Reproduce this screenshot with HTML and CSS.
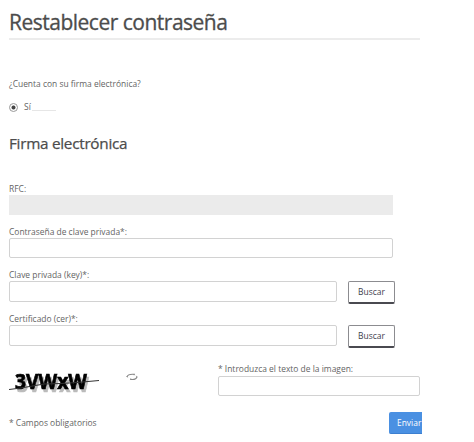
FILE: index.html
```html
<!DOCTYPE html>
<html lang="es">
<head>
    <meta charset="UTF-8">
    <meta name="viewport" content="width=device-width, initial-scale=1.0">
    <title>Restablecer contraseña</title>
    <link rel="stylesheet" href="styles.css">
</head>
<body>
    <form class="page">
        <h1 class="title">Restablecer contraseña</h1>

        <p class="question">¿Cuenta con su firma electrónica?</p>
        <label class="option">
            <input type="radio" class="radio" name="firma" checked>
            <span>Sí</span>
            <span class="option-line"></span>
        </label>

        <h2 class="subtitle">Firma electrónica</h2>

        <div class="group">
            <label for="rfc">RFC:</label>
            <input type="text" class="field disabled" id="rfc" disabled>
        </div>
        <div class="group">
            <label for="clave">Contraseña de clave privada*:</label>
            <input type="password" class="field" id="clave">
        </div>
        <div class="group file-group">
            <label for="key">Clave privada (key)*:</label>
            <div class="file-row">
                <input type="text" class="field" id="key">
                <button type="button" class="browse">Buscar</button>
            </div>
        </div>
        <div class="group file-group">
            <label for="cer">Certificado (cer)*:</label>
            <div class="file-row">
                <input type="text" class="field" id="cer">
                <button type="button" class="browse">Buscar</button>
            </div>
        </div>

        <div class="captcha-row">
            <svg class="captcha" width="92" height="32" viewBox="0 0 92 32">
                <text class="captcha-text" x="6" y="22" textLength="72" lengthAdjust="spacingAndGlyphs">3VWxW</text>
                <path d="M0 22.5 L12 21 L35 17 L52 16.5 L68 15.5 L90 13.5" fill="none" stroke="#333" stroke-width="1"/>
            </svg>
            <svg class="refresh" width="12" height="8" viewBox="0 0 12 8" fill="none" stroke="#888" stroke-width="1.1">
                <path d="M1 4 C1.6 1.8 4.6 1 8.6 1.4"/>
                <path d="M11 3.6 C10.6 6 8 6.8 4.4 6.4"/>
                <path d="M8.4 .9 L8.2 2.3 M4.5 7 L4.7 5.4 M.6 3 L1.6 4.4 M10.2 2.8 L11.2 4.2" stroke-width=".8"/>
            </svg>
            <div class="captcha-group">
                <label for="texto">* Introduzca el texto de la imagen:</label>
                <input type="text" class="field" id="texto">
            </div>
        </div>

        <div class="footer">
            <span class="required">* Campos obligatorios</span>
            <button type="button" class="send">Enviar</button>
        </div>
    </form>
</body>
</html>
```
FILE: styles.css
```css
* {
    box-sizing: border-box;
}

body {
    margin: 0;
    background-color: #fff;
    color: #646464;
    font-family: 'Open Sans', 'Noto Sans', sans-serif;
    font-size: 8.45px;
    line-height: 12px;
}

.page {
    width: 413px;
    margin-left: 9px;
    padding-top: 8px;
}

h1, h2, p {
    margin: 0;
}

.title {
    width: 411px;
    height: 32px;
    border-bottom: 2px solid #ececec;
    color: #4c4c4c;
    font-size: 21px;
    font-weight: 400;
    line-height: 28px;
    letter-spacing: -0.5px;
    -webkit-text-stroke: 0.3px #4c4c4c;
}

.question {
    margin-top: 38px;
}

.option {
    display: flex;
    align-items: center;
    height: 12px;
    margin-top: 11px;
}

.radio {
    appearance: none;
    width: 9px;
    height: 9px;
    margin: 0 6px 0 0;
    border: 1px solid #999;
    border-radius: 50%;
    background: radial-gradient(circle, #444 0 1.6px, #fff 2.4px);
}

.option-line {
    align-self: flex-end;
    width: 24px;
    height: 1px;
    margin: 0 0 2px 1px;
    background-color: #e6e6e6;
}

.subtitle {
    margin-top: 20px;
    color: #4c4c4c;
    font-size: 15.3px;
    font-weight: 400;
    line-height: 20px;
    letter-spacing: -0.28px;
    -webkit-text-stroke: 0.25px #4c4c4c;
}

.group {
    width: 384px;
    height: 43px;
}

.subtitle + .group {
    margin-top: 30px;
}

.group label, .captcha-group label {
    display: block;
}

.field {
    display: block;
    width: 100%;
    height: 20px;
    padding: 0 4px;
    border: 1px solid #d2d2d2;
    border-radius: 2px;
    background-color: #fff;
}

.disabled {
    border-color: #ebebeb;
    background-color: #ebebeb;
    border-radius: 0;
}

.file-group {
    width: 386px;
    height: 44px;
}

.file-row {
    display: flex;
    gap: 11px;
}

.file-row .field {
    width: 328px;
    height: 21px;
}

.browse {
    width: 47px;
    height: 23px;
    padding: 0;
    border: 1px solid #8c8c90;
    border-bottom: 2px solid #4a4a50;
    border-radius: 2px;
    background-color: #fff;
    color: #3c3c4c;
    font: inherit;
}

.captcha-row {
    display: flex;
    margin-top: 6px;
    height: 46px;
}

.captcha {
    margin-top: 4px;
}

.captcha-text {
    fill: #000;
    stroke: #000;
    stroke-width: 0.7px;
    font-size: 20.5px;
    font-weight: 700;
    filter: drop-shadow(2px 3px 0.3px #bbb);
}

.refresh {
    margin: 10px 0 0 25px;
}

.captcha-group {
    width: 202px;
    margin-left: 80px;
}

.captcha-group .field {
    margin-top: 1px;
}

.footer {
    display: flex;
    justify-content: space-between;
    align-items: center;
    margin-top: 3px;
}

.send {
    width: 33px;
    height: 22px;
    padding: 0 0 0 8px;
    overflow: hidden;
    border: 0;
    border-bottom: 1px solid #3c7fd0;
    border-radius: 2px 0 0 2px;
    background-color: #4a90e2;
    color: #fff;
    font: inherit;
    text-align: left;
}
```
